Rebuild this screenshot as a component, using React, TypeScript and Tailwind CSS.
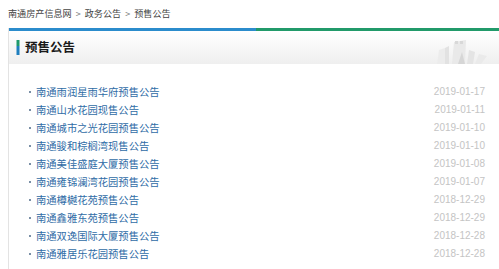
import React from "react";

const items: [string, string][] = [
  ["南通雨润星雨华府预售公告", "2019-01-17"],
  ["南通山水花园现售公告", "2019-01-11"],
  ["南通城市之光花园预售公告", "2019-01-10"],
  ["南通骏和棕榈湾现售公告", "2019-01-10"],
  ["南通美佳盛庭大厦预售公告", "2019-01-08"],
  ["南通雍锦澜湾花园预售公告", "2019-01-07"],
  ["南通樽樾花苑预售公告", "2018-12-29"],
  ["南通鑫雅东苑预售公告", "2018-12-29"],
  ["南通双逸国际大厦预售公告", "2018-12-28"],
  ["南通雅居乐花园预售公告", "2018-12-28"],
];

const cjk = { fontFamily: '"Noto Sans CJK SC", "Noto Sans", sans-serif' };

export default function App() {
  return (
    <div className="w-[499px] h-[269px] bg-white overflow-hidden" style={cjk}>
      <div className="h-[28px] pl-[8px] flex items-center text-[9.1px] text-[#444] leading-none gap-[4px]">
        <span>南通房产信息网</span>
        <span className="text-[#777]">&gt;</span>
        <span>政务公告</span>
        <span className="text-[#777]">&gt;</span>
        <span>预售公告</span>
      </div>
      <div className="ml-[8px] border-l border-[#e3e3e3] h-[241px]">
        <div className="flex h-[3px]">
          <div className="w-[247px] bg-[#2b8ccc]" />
          <div className="flex-1 bg-[#219a6a]" />
        </div>
        <div className="relative h-[33px] bg-gradient-to-b from-white to-[#efefef] flex items-center pl-[7px] gap-[5px]">
          <svg width="4" height="15" viewBox="0 0 4 15">
            <polygon points="0.5,0 3.5,0 3.5,6 0.5,6" fill="#1f9a6c" />
            <polygon points="0.5,6 3.5,6 3.5,15 0.5,15" fill="#1f7fbf" />
          </svg>
          <span className="text-[12.5px] font-bold text-[#1a1a1a] leading-none">预售公告</span>
          <svg className="absolute right-[8px] bottom-0" width="56" height="28" viewBox="0 0 56 28">
            <polygon points="2,28 4,14 10,12 10,28" fill="#ececec" />
            <polygon points="10,28 10,12 14,10 14,28" fill="#e2e2e2" />
            <polygon points="17,28 19,6 31,4 30,28" fill="#e9e9e9" />
            <rect x="20" y="5" width="3" height="3" fill="#d8d8d8" />
            <rect x="25" y="5" width="3" height="3" fill="#d8d8d8" />
            <polygon points="23,28 27,16 30,28" fill="#d6d6d6" />
            <polygon points="32,28 34,14 40,16 38,28" fill="#e4e4e4" />
            <polygon points="40,28 44,18 52,20 46,28" fill="#eaeaea" />
          </svg>
        </div>
        <ul className="pt-[19px] pl-[20px] pr-[14px]">
          {items.map(([t, d]) => (
            <li key={t} className="flex items-center h-[18px] leading-none">
              <span className="w-[2px] h-[2px] bg-[#7a8fa6] mr-[5px] shrink-0" />
              <span className="text-[10.3px] text-[#2f6ca6] flex-1">{t}</span>
              <span className="text-[10px] text-[#c4c4c4]" style={{ fontFamily: '"Liberation Sans", sans-serif' }}>{d}</span>
            </li>
          ))}
        </ul>
      </div>
    </div>
  );
}
